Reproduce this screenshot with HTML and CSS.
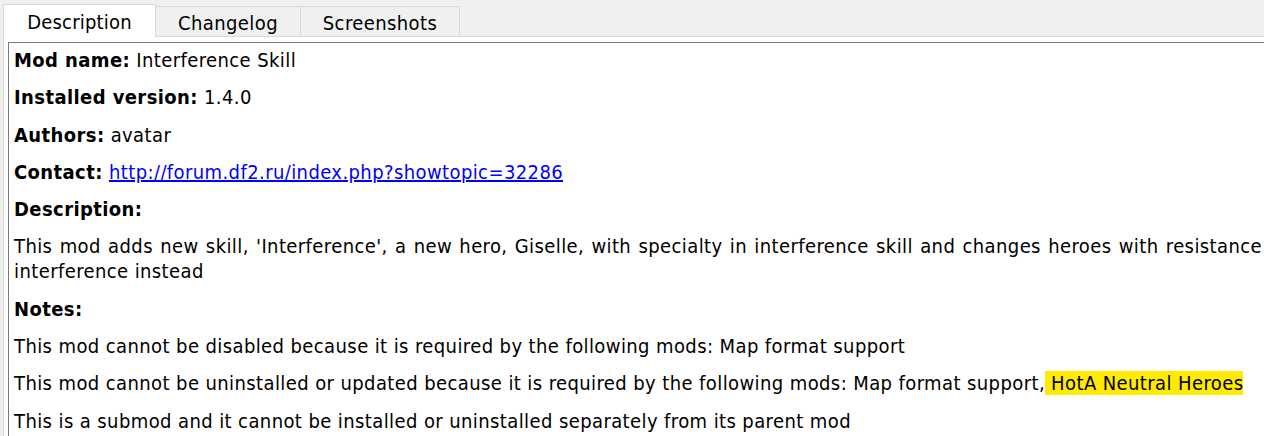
FILE: index.html
```html
<!DOCTYPE html>
<html>
<head>
<meta charset="utf-8">
<link rel="stylesheet" href="styles.css">
</head>
<body>
<div class="window">
  <div class="tabbar">
    <div class="tab tab-active tab-desc">Description</div>
    <div class="tab tab-log">Changelog</div>
    <div class="tab tab-shots">Screenshots</div>
  </div>
  <div class="pane">
    <div class="textbox">
      <p><b>Mod name:</b> Interference Skill</p>
      <p><b>Installed version:</b> 1.4.0</p>
      <p><b>Authors:</b> avatar</p>
      <p><b>Contact:</b> <a href="#">http://forum.df2.ru/index.php?showtopic=32286</a></p>
      <p><b>Description:</b></p>
      <p class="just">This mod adds new skill, 'Interference', a new hero, Giselle, with specialty in interference skill and changes heroes with resistance interference instead</p>
      <p><b>Notes:</b></p>
      <p>This mod cannot be disabled because it is required by the following mods: Map format support</p>
      <p>This mod cannot be uninstalled or updated because it is required by the following mods: Map format support,<span class="hl"> HotA Neutral Heroes </span></p>
      <p>This is a submod and it cannot be installed or uninstalled separately from its parent mod</p>
    </div>
  </div>
</div>
</body>
</html>
```
FILE: styles.css
```css
html, body {
  margin: 0;
  padding: 0;
  background: #f0f0f0;
  overflow: hidden;
  width: 1264px;
  height: 436px;
}

.window {
  width: 1300px;
  font-family: "DejaVu Sans Condensed", "DejaVu Sans", sans-serif;
  font-stretch: condensed;
  font-size: 20px;
  letter-spacing: 0.4px;
  color: #000;
}

.tabbar {
  display: flex;
  align-items: flex-end;
  padding: 4px 0 0 3px;
  height: 32px;
}

.tab {
  box-sizing: border-box;
  height: 30px;
  background: #f0f0f0;
  border-top: 1px solid #d9d9d9;
  border-right: 1px solid #d9d9d9;
  display: flex;
  align-items: center;
  justify-content: center;
  padding-top: 3px;
}

.tab-active {
  position: relative;
  z-index: 1;
  height: 33px;
  margin-bottom: -1px;
  background: #fff;
  border-left: 1px solid #d9d9d9;
  padding-top: 1px;
  letter-spacing: 0.2px;
}

.tab-desc { width: 153px; }
.tab-log { width: 145px; }
.tab-shots { width: 159px; }

.pane {
  margin-left: 3px;
  background: #fff;
  border-top: 1px solid #d9d9d9;
  border-left: 1px solid #d9d9d9;
  padding: 5px 0 0 4px;
  height: 420px;
}

.textbox {
  border-top: 1px solid #7a7a7a;
  border-left: 1px solid #7a7a7a;
  border-right: 1px solid #7a7a7a;
  padding: 5px 5px 0 5px;
  width: 1248px;
  height: 420px;
}

.textbox p {
  margin: 0 0 12.3px 0;
  line-height: 25px;
  white-space: nowrap;
}

.textbox p.just {
  white-space: normal;
  text-align: justify;
}

.textbox b {
  font-weight: bold;
}

.textbox a {
  color: #0000ff;
  text-decoration: underline;
}

.hl {
  background: #ffea00;
}
```
